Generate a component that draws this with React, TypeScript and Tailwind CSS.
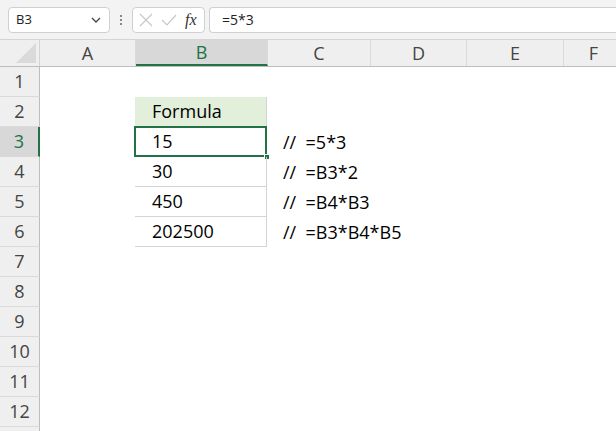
import React from "react";

const cols = [
  { l: "A", w: 96 },
  { l: "B", w: 132 },
  { l: "C", w: 103 },
  { l: "D", w: 96 },
  { l: "E", w: 97 },
  { l: "F", w: 60 },
];

const data: Record<number, { b?: string; c?: string; head?: boolean }> = {
  2: { b: "Formula", head: true },
  3: { b: "15", c: "//  =5*3" },
  4: { b: "30", c: "//  =B3*2" },
  5: { b: "450", c: "//  =B4*B3" },
  6: { b: "202500", c: "//  =B3*B4*B5" },
};

export default function App() {
  const rows = Array.from({ length: 13 }, (_, i) => i + 1);
  return (
    <div className="w-[616px] h-[431px] overflow-hidden bg-white" style={{ fontFamily: '"Open Sans", "Noto Sans", sans-serif' }}>
      <div className="h-[40px] bg-[#f3f3f3] flex items-center pl-[8px] gap-[4px] border-b border-[#d4d4d4]">
        <div className="w-[102px] h-[26px] bg-white border border-[#d0d0d0] rounded-[4px] flex items-center justify-between px-[7px] text-[13px] text-[#222]">
          <span>B3</span>
          <svg width="12" height="8" viewBox="0 0 12 8"><path d="M2 2l4 4 4-4" fill="none" stroke="#444" strokeWidth="1.3" /></svg>
        </div>
        <div className="w-[14px] flex flex-col items-center gap-[2px]">
          <span className="w-[2px] h-[2px] bg-[#888]" />
          <span className="w-[2px] h-[2px] bg-[#888]" />
          <span className="w-[2px] h-[2px] bg-[#888]" />
        </div>
        <div className="w-[73px] h-[26px] bg-white border border-[#d0d0d0] rounded-[4px] flex items-center px-[6px] gap-[8px]">
          <svg width="14" height="14" viewBox="0 0 14 14"><path d="M1 1l12 12M13 1L1 13" stroke="#c8c8c8" strokeWidth="1.2" /></svg>
          <svg width="16" height="14" viewBox="0 0 16 14"><path d="M1 7l5 5L15 2" fill="none" stroke="#c8c8c8" strokeWidth="1.2" /></svg>
          <span className="italic text-[16px] text-[#333] leading-none" style={{ fontFamily: '"Liberation Serif", serif' }}>fx</span>
        </div>
        <div className="flex-1 h-[26px] bg-white border border-[#d0d0d0] border-r-0 rounded-l-[4px] flex items-center pl-[12px] text-[14px] text-[#222]">=5*3</div>
      </div>
      <div className="flex h-[27px] bg-[#efefef] border-b border-[#bdbdbd]">
        <div className="w-[40px] shrink-0 border-r border-[#d4d4d4] relative">
          <svg className="absolute right-[3px] bottom-[3px]" width="20" height="20" viewBox="0 0 20 20"><path d="M20 0V20H0Z" fill="#dadada" /></svg>
        </div>
        {cols.map((c) => (
          <div
            key={c.l}
            style={{ width: c.w }}
            className={`shrink-0 flex items-center justify-center text-[18px] border-r border-[#dadada] ${c.l === "B" ? "bg-[#d8d8d8] text-[#217346] border-b-2 border-b-[#217346]" : "text-[#444]"}`}
          >
            {c.l}
          </div>
        ))}
      </div>
      {rows.map((r) => {
        const d = data[r];
        return (
          <div key={r} className="flex h-[30px]">
            <div className={`w-[40px] shrink-0 flex items-center justify-center text-[18px] border-b border-[#dadada] ${r === 3 ? "bg-[#d8d8d8] text-[#217346] border-r-2 border-r-[#217346]" : "bg-[#efefef] text-[#444] border-r border-r-[#bdbdbd]"}`}>
              {r}
            </div>
            <div className="w-[95px] shrink-0" />
            <div className={`w-[132px] shrink-0 relative flex items-center pl-[17px] text-[18px] text-black ${d ? "border-b border-r border-[#d4d4d4]" : ""} ${d?.head ? "bg-[#e2efda]" : ""}`}>
              {d?.b}
              {r === 3 && (
                <>
                  <div className="absolute -left-[1px] -top-[1px] -right-[1px] -bottom-[1px] border-2 border-[#217346]" />
                  <div className="absolute -right-[4px] -bottom-[4px] w-[6px] h-[6px] bg-[#217346] border border-white" />
                </>
              )}
            </div>
            <div className="flex items-center pl-[16px] text-[18px] text-black whitespace-pre">{d?.c}</div>
          </div>
        );
      })}
    </div>
  );
}
